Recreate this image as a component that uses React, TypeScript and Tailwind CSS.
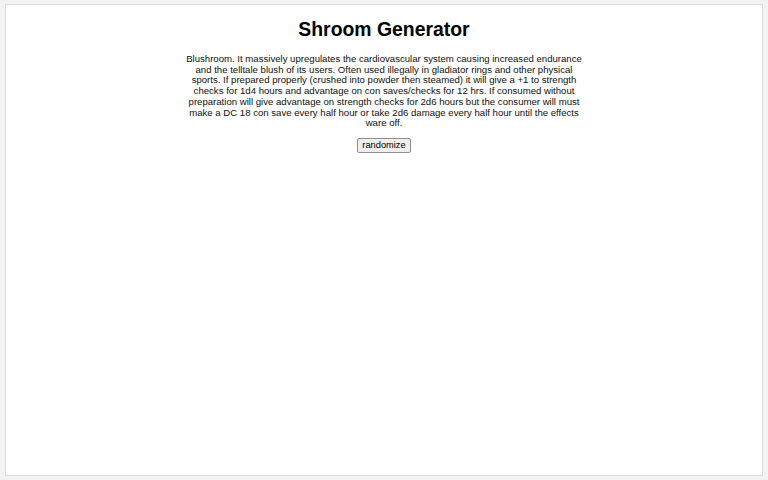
import { useState } from 'react'

const shrooms = [
  'Blushroom. It massively upregulates the cardiovascular system causing increased endurance and the telltale blush of its users. Often used illegally in gladiator rings and other physical sports. If prepared properly (crushed into powder then steamed) it will give a +1 to strength checks for 1d4 hours and advantage on con saves/checks for 12 hrs. If consumed without preparation will give advantage on strength checks for 2d6 hours but the consumer will must make a DC 18 con save every half hour or take 2d6 damage every half hour until the effects ware off.',
]

export default function App() {
  const [index, setIndex] = useState(0)

  const randomize = (): void => setIndex(Math.floor(Math.random() * shrooms.length))

  return (
    <div className="h-[480px] bg-[#f3f3f3] px-[5px] pt-[4px] pb-[4px] font-['Liberation_Sans',Arial,sans-serif]">
      <div className="h-full border border-[#dedede] bg-white flex flex-col items-center">
        <h1 className="mt-[12px] text-[19.4px] leading-[24px] font-bold text-black">Shroom Generator</h1>
        <p className="mt-[13px] w-[400px] text-center text-[9.6px] leading-[10.7px] text-[#111]">
          {shrooms[index]}
        </p>
        <button
          onClick={randomize}
          className="mt-[9px] px-[4px] h-[15px] text-[9.3px] leading-[13px] text-black bg-[#efefef] border border-[#8f8f8f] rounded-[2px]"
        >
          randomize
        </button>
      </div>
    </div>
  )
}
